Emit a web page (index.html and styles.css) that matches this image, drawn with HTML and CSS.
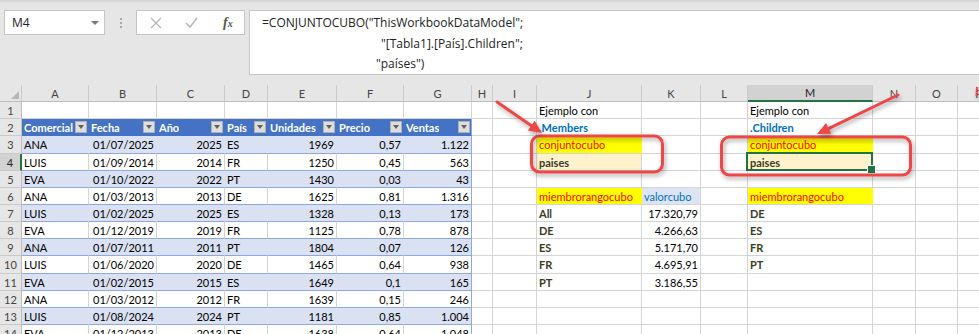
FILE: index.html
```html
<!DOCTYPE html>
<html lang="es">
<head>
  <meta charset="UTF-8">
  <title>CONJUNTOCUBO - Children</title>
  <link rel="stylesheet" href="styles.css">
</head>
<body>
  <div class="topbar">
    <div class="namebox"><span>M4</span><span class="caret"></span></div>
    <div class="grip"></div>
    <div class="fxbox">
      <svg class="btn" width="12" height="12" viewBox="0 0 12 12"><path d="M1 1 L11 11 M11 1 L1 11" stroke="#b8b8b8" stroke-width="1.3" fill="none"/></svg>
      <svg class="btn" width="13" height="11" viewBox="0 0 13 11"><path d="M1 6 L5 10 L12 1" stroke="#b8b8b8" stroke-width="1.6" fill="none"/></svg>
      <span class="fx">f<small>x</small></span>
    </div>
    <div class="formula">
      <div>=CONJUNTOCUBO("ThisWorkbookDataModel";</div>
      <div class="indent2">"[Tabla1].[País].Children";</div>
      <div class="indent3">"países")</div>
    </div>
  </div>

  <table class="sheet">
    <colgroup>
      <col style="width:22px"><col style="width:67px"><col style="width:68px"><col style="width:68px">
      <col style="width:43px"><col style="width:69px"><col style="width:67px"><col style="width:68px">
      <col style="width:21px"><col style="width:44px"><col style="width:105px"><col style="width:59px">
      <col style="width:47px"><col style="width:125px"><col style="width:43px"><col style="width:42px">
      <col style="width:42px">
    </colgroup>
    <tr class="colhead">
      <th class="corner"><span class="tri"></span></th>
      <th>A</th><th>B</th><th>C</th><th>D</th><th>E</th><th>F</th><th>G</th><th>H</th>
      <th>I</th><th>J</th><th>K</th><th>L</th><th class="active">M</th><th>N</th><th>O</th><th>P</th>
    </tr>
    <tr>
      <th class="rowhead">1</th>
      <td></td><td></td><td></td><td></td><td></td><td></td><td></td><td></td>
      <td></td><td>Ejemplo con</td><td></td><td></td><td>Ejemplo con</td><td></td><td></td><td></td>
    </tr>
    <tr>
      <th class="rowhead">2</th>
      <td class="hd"><div class="hd-in"><span>Comercial</span><span class="dd"></span></div></td>
      <td class="hd"><div class="hd-in"><span>Fecha</span><span class="dd"></span></div></td>
      <td class="hd"><div class="hd-in"><span>Año</span><span class="dd"></span></div></td>
      <td class="hd"><div class="hd-in"><span>País</span><span class="dd"></span></div></td>
      <td class="hd"><div class="hd-in"><span>Unidades</span><span class="dd"></span></div></td>
      <td class="hd"><div class="hd-in"><span>Precio</span><span class="dd"></span></div></td>
      <td class="hd last"><div class="hd-in"><span>Ventas</span><span class="dd"></span></div></td>
      <td></td><td></td><td class="tag">.Members</td><td></td><td></td><td class="tag">.Children</td><td></td><td></td><td></td>
    </tr>
    <tr class="tall">
      <th class="rowhead">3</th>
      <td class="t band">ANA</td><td class="t band n">01/07/2025</td><td class="t band n">2025</td><td class="t band">ES</td><td class="t band n">1969</td><td class="t band n">0,57</td><td class="t band n last">1.122</td>
      <td></td><td></td><td class="fn">conjuntocubo</td><td></td><td></td><td class="fn">conjuntocubo</td><td></td><td></td><td></td>
    </tr>
    <tr>
      <th class="rowhead active">4</th>
      <td class="t">LUIS</td><td class="t n">01/09/2014</td><td class="t n">2014</td><td class="t">FR</td><td class="t n">1250</td><td class="t n">0,45</td><td class="t n last">563</td>
      <td></td><td></td><td class="out">paises</td><td></td><td></td><td class="out sel">paises</td><td></td><td></td><td></td>
    </tr>
    <tr>
      <th class="rowhead">5</th>
      <td class="t band">EVA</td><td class="t band n">01/10/2022</td><td class="t band n">2022</td><td class="t band">PT</td><td class="t band n">1430</td><td class="t band n">0,03</td><td class="t band n last">43</td>
      <td></td><td></td><td></td><td></td><td></td><td></td><td></td><td></td><td></td>
    </tr>
    <tr>
      <th class="rowhead">6</th>
      <td class="t">ANA</td><td class="t n">01/03/2013</td><td class="t n">2013</td><td class="t">DE</td><td class="t n">1625</td><td class="t n">0,81</td><td class="t n last">1.316</td>
      <td></td><td></td><td class="fn">miembrorangocubo</td><td class="val">valorcubo</td><td></td><td class="fn">miembrorangocubo</td><td></td><td></td><td></td>
    </tr>
    <tr>
      <th class="rowhead">7</th>
      <td class="t band">LUIS</td><td class="t band n">01/02/2025</td><td class="t band n">2025</td><td class="t band">ES</td><td class="t band n">1328</td><td class="t band n">0,13</td><td class="t band n last">173</td>
      <td></td><td></td><td class="item">All</td><td class="n">17.320,79</td><td></td><td class="item">DE</td><td></td><td></td><td></td>
    </tr>
    <tr>
      <th class="rowhead">8</th>
      <td class="t">EVA</td><td class="t n">01/12/2019</td><td class="t n">2019</td><td class="t">FR</td><td class="t n">1125</td><td class="t n">0,78</td><td class="t n last">878</td>
      <td></td><td></td><td class="item">DE</td><td class="n">4.266,63</td><td></td><td class="item">ES</td><td></td><td></td><td></td>
    </tr>
    <tr>
      <th class="rowhead">9</th>
      <td class="t band">ANA</td><td class="t band n">01/07/2011</td><td class="t band n">2011</td><td class="t band">PT</td><td class="t band n">1804</td><td class="t band n">0,07</td><td class="t band n last">126</td>
      <td></td><td></td><td class="item">ES</td><td class="n">5.171,70</td><td></td><td class="item">FR</td><td></td><td></td><td></td>
    </tr>
    <tr class="tall">
      <th class="rowhead">10</th>
      <td class="t">LUIS</td><td class="t n">01/06/2020</td><td class="t n">2020</td><td class="t">DE</td><td class="t n">1465</td><td class="t n">0,64</td><td class="t n last">938</td>
      <td></td><td></td><td class="item">FR</td><td class="n">4.695,91</td><td></td><td class="item">PT</td><td></td><td></td><td></td>
    </tr>
    <tr>
      <th class="rowhead">11</th>
      <td class="t band">EVA</td><td class="t band n">01/02/2015</td><td class="t band n">2015</td><td class="t band">ES</td><td class="t band n">1649</td><td class="t band n">0,1</td><td class="t band n last">165</td>
      <td></td><td></td><td class="item">PT</td><td class="n">3.186,55</td><td></td><td></td><td></td><td></td><td></td>
    </tr>
    <tr>
      <th class="rowhead">12</th>
      <td class="t">ANA</td><td class="t n">01/03/2012</td><td class="t n">2012</td><td class="t">FR</td><td class="t n">1639</td><td class="t n">0,15</td><td class="t n last">246</td>
      <td></td><td></td><td></td><td></td><td></td><td></td><td></td><td></td><td></td>
    </tr>
    <tr>
      <th class="rowhead">13</th>
      <td class="t band">LUIS</td><td class="t band n">01/08/2024</td><td class="t band n">2024</td><td class="t band">PT</td><td class="t band n">1181</td><td class="t band n">0,85</td><td class="t band n last">1.004</td>
      <td></td><td></td><td></td><td></td><td></td><td></td><td></td><td></td><td></td>
    </tr>
    <tr>
      <th class="rowhead">14</th>
      <td class="t">EVA</td><td class="t n">01/12/2013</td><td class="t n">2013</td><td class="t">DE</td><td class="t n">1638</td><td class="t n">0,64</td><td class="t n last">1.048</td>
      <td></td><td></td><td></td><td></td><td></td><td></td><td></td><td></td><td></td>
    </tr>
  </table>

  <!-- callouts drawn over the sheet -->
  <svg class="callouts" width="979" height="334" viewBox="0 0 979 334">
    <defs>
      <filter id="shadow" x="-20%" y="-20%" width="140%" height="160%">
        <feDropShadow dx="1.5" dy="2.5" stdDeviation="2" flood-color="#000" flood-opacity="0.35"/>
      </filter>
    </defs>
    <g filter="url(#shadow)" fill="none" stroke="#ee4646" stroke-width="3">
      <rect x="531.5" y="136" width="131" height="36" rx="8"/>
      <rect x="721.5" y="137" width="189" height="38" rx="8"/>
      <line x1="497" y1="102" x2="531" y2="125.6" stroke-linecap="round"/>
      <line x1="898" y1="95" x2="829" y2="128.4" stroke-linecap="round"/>
      <line x1="977" y1="87" x2="976.5" y2="96" stroke-width="2"/>
    </g>
    <g filter="url(#shadow)" fill="#ee4646">
      <polygon points="542,133 527.9,130.5 534.7,120.7"/>
      <polygon points="817,134 826.1,123 831.3,133.8"/>
    </g>
  </svg>
</body>
</html>
```

FILE: styles.css
```css
* {
  box-sizing: border-box;
}

body {
  margin: 0;
  width: 979px;
  height: 334px;
  overflow: hidden;
  position: relative;
  background: #e6e6e6;
  font-family: Lato, sans-serif;
}

/* formula bar */
.topbar {
  height: 85px;
  display: flex;
  align-items: flex-start;
  padding: 10px 0 0 4px;
  background: linear-gradient(#d2d2d2, #e6e6e6 4px);
  font-family: "Open Sans", sans-serif;
  color: #222;
}

.namebox {
  width: 101px;
  height: 25px;
  background: #fff;
  border: 1px solid #c6c6c6;
  display: flex;
  align-items: center;
  justify-content: space-between;
  padding: 0 5px 0 7px;
  font-size: 12px;
}

.caret {
  border-left: 4px solid transparent;
  border-right: 4px solid transparent;
  border-top: 4px solid #7a7a7a;
}

.grip {
  width: 2px;
  height: 2px;
  margin: 8px 14px 0 15px;
  background: #a8a8a8;
  box-shadow: 0 4px #a8a8a8, 0 8px #a8a8a8;
}

.fxbox {
  width: 109px;
  height: 25px;
  background: #fff;
  border: 1px solid #c6c6c6;
  display: flex;
  align-items: center;
  padding-left: 13px;
  gap: 23px;
}

.fx {
  font-family: "Liberation Serif", serif;
  font-style: italic;
  font-weight: bold;
  font-size: 14px;
  color: #555;
  margin-left: 2px;
}

.fx small {
  font-size: 10px;
}

.formula {
  flex: 1;
  height: 65px;
  margin: 0 -10px 0 4px;
  background: #fff;
  border: 1px solid #c6c6c6;
  padding: 2px 0 0 12px;
  font-size: 12px;
  line-height: 20.5px;
  white-space: nowrap;
}

.indent2 {
  padding-left: 119px;
}

.indent3 {
  padding-left: 114px;
}

/* sheet grid */
.sheet {
  width: 1000px;
  table-layout: fixed;
  border-collapse: separate;
  border-spacing: 0;
  background: #fff;
  font-size: 11px;
  color: #000;
}

.sheet tr {
  height: 17px;
}

.sheet tr.tall {
  height: 18px;
}

.sheet tr.colhead {
  height: 16px;
}

.sheet td,
.sheet th {
  padding: 0 2px;
  border-right: 1px solid #d4d4d4;
  border-bottom: 1px solid #d4d4d4;
  white-space: nowrap;
  overflow: hidden;
  line-height: 15px;
  text-align: left;
  font-weight: normal;
}

.colhead th {
  background: #e6e6e6;
  color: #444;
  text-align: center;
  border-right-color: #cacaca;
  border-bottom-color: #bdbdbd;
}

.colhead th.active {
  background: #d2d2d2;
  color: #222;
  border-bottom: 2px solid #217346;
}

.corner {
  vertical-align: bottom;
}

.tri {
  display: block;
  width: 0;
  margin: 0 0 2px auto;
  border-left: 8px solid transparent;
  border-bottom: 8px solid #b8b8b8;
}

.sheet th.rowhead {
  background: #e6e6e6;
  color: #444;
  border-right-color: #bdbdbd;
  border-bottom-color: #cacaca;
  text-align: center;
}

.sheet th.rowhead.active {
  background: #d2d2d2;
  color: #222;
  border-right: 2px solid #217346;
}

/* excel table */
.sheet td.hd {
  background: #4472c4;
  color: #fff;
  font-weight: bold;
  border-right-color: #4472c4;
  border-bottom-color: #4472c4;
  padding-right: 1px;
}

.hd-in {
  display: flex;
  align-items: center;
  justify-content: space-between;
}

.hd-in span:first-child {
  overflow: hidden;
}

.dd {
  flex: none;
  width: 12px;
  height: 12px;
  background: #dedede;
  border: 1px solid #b0b0b0;
  display: flex;
  align-items: center;
  justify-content: center;
}

.dd::after {
  content: "";
  border-left: 3.5px solid transparent;
  border-right: 3.5px solid transparent;
  border-top: 4px solid #606060;
}

.sheet td.t {
  border-bottom-color: #8ea9db;
}

.sheet td.band {
  background: #d9e1f2;
  border-right-color: #d9e1f2;
}

.sheet td.last {
  border-right-color: #8ea9db;
}

.sheet td.n {
  text-align: right;
}

/* cube formula samples */
.sheet td.tag {
  color: #0070c0;
  font-weight: bold;
}

.sheet td.fn {
  background: #ffff00;
  color: #ff0000;
  border-right-color: #ffff00;
}

.sheet td.out {
  background: #fff2cc;
  color: #3b3b22;
  font-weight: bold;
  position: relative;
  overflow: visible;
}

.sheet td.val {
  background: #dde5f4;
  color: #0070c0;
}

.sheet td.item {
  color: #3b3b22;
  font-weight: bold;
}

.sel::before {
  content: "";
  position: absolute;
  left: -2px;
  top: -2px;
  right: -1px;
  bottom: -1px;
  border: 2px solid #217346;
}

.sel::after {
  content: "";
  position: absolute;
  right: -4px;
  bottom: -4px;
  width: 7px;
  height: 7px;
  background: #217346;
  border: 1px solid #fff;
}

.callouts {
  position: absolute;
  left: 0;
  top: 0;
  pointer-events: none;
}
```
